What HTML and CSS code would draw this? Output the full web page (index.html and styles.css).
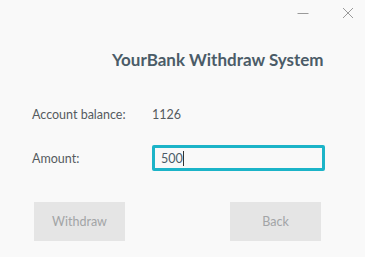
FILE: index.html
```html
<!DOCTYPE html>
<html lang="en">
<head>
  <meta charset="UTF-8" />
  <title>YourBank Withdraw System</title>
  <link rel="stylesheet" href="styles.css">
</head>
<body>

  <div class="window">
    <div class="titlebar">
      <svg class="ctrl" width="12" height="12" viewBox="0 0 12 12">
        <line x1="0.5" y1="6.5" x2="11.5" y2="6.5" stroke="#9a9a9a" stroke-width="1"/>
      </svg>
      <svg class="ctrl" width="12" height="12" viewBox="0 0 12 12">
        <path d="M1 1 L11 11 M11 1 L1 11" stroke="#9a9a9a" stroke-width="1" fill="none"/>
      </svg>
    </div>

    <h1 class="title">YourBank Withdraw System</h1>

    <div class="form">
      <div class="label">Account balance:</div>
      <div class="value">1126</div>

      <div class="label">Amount:</div>
      <div class="field">500<span class="caret"></span></div>
    </div>

    <div class="actions">
      <button class="btn">Withdraw</button>
      <button class="btn">Back</button>
    </div>
  </div>

</body>
</html>
```

FILE: styles.css
```css
* {
  box-sizing: border-box;
}

body {
  margin: 0;
  font-family: 'Lato', 'Noto Sans', sans-serif;
  background: #f9f9f9;
  color: #555b60;
}

.window {
  width: 365px;
  height: 257px;
}

.titlebar {
  height: 28px;
  display: flex;
  justify-content: flex-end;
  align-items: flex-start;
  gap: 33px;
  padding: 7px 11px 0 0;
}

.ctrl {
  display: block;
}

.title {
  margin: 21px 0 0;
  padding-left: 112px;
  font-size: 17px;
  line-height: 22px;
  font-weight: bold;
  color: #4b5c68;
}

.form {
  display: grid;
  grid-template-columns: 120px 173px;
  grid-auto-rows: 26px;
  row-gap: 18px;
  margin-top: 30px;
  padding-left: 32px;
  font-size: 12.5px;
  align-items: center;
}

.field {
  height: 26px;
  border: 3px solid #1cb4c8;
  border-radius: 2px;
  background: #f9f9f9;
  padding: 0 6px;
  display: flex;
  align-items: center;
  color: #4b5c68;
}

.caret {
  display: inline-block;
  width: 1px;
  height: 15px;
  background: #333;
}

.actions {
  display: flex;
  gap: 105px;
  margin-top: 31px;
  padding-left: 34px;
}

.btn {
  width: 91px;
  height: 39px;
  border: none;
  background: #e5e5e5;
  color: #a2a4a6;
  font-family: inherit;
  font-size: 12.5px;
}
```
